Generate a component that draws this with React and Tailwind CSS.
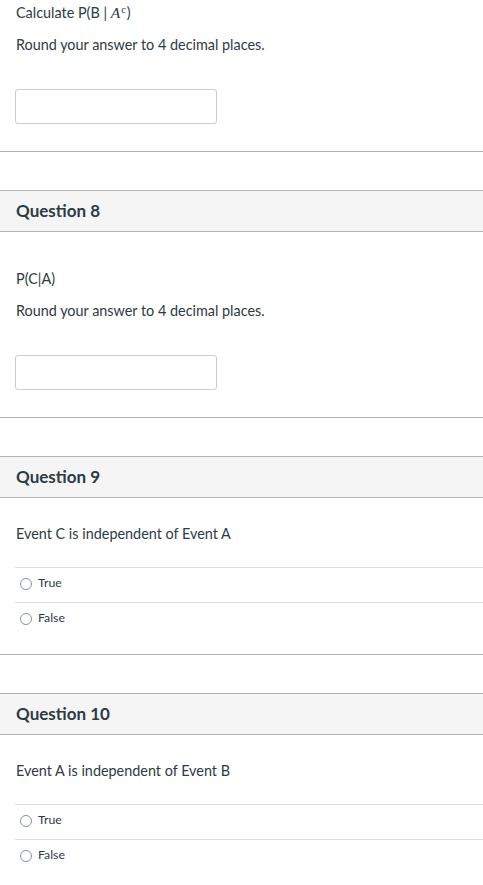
import React from "react";

const font = { fontFamily: "Lato, 'Open Sans', sans-serif" };

function Header({ n }) {
  return (
    <div className="mt-[38px] h-[42px] border-y border-[#b0b3b5] bg-[#f5f5f5] flex items-center pl-4 pb-[2px]">
      <h2 className="text-[17px] font-bold text-[#2d3b45] leading-none">Question {n}</h2>
    </div>
  );
}

function Radio({ label }) {
  return (
    <div className="ml-[15px] h-[35px] flex items-center pb-[3px] border-t border-[#dcdfe1]">
      <span className="ml-[5px] w-[12px] h-[12px] rounded-full border border-[#8b9399] bg-white" />
      <span className="ml-[6px] text-[12.3px] text-[#2d3b45]">{label}</span>
    </div>
  );
}

function TF() {
  return (
    <div className="mt-[23px]">
      <Radio label="True" />
      <Radio label="False" />
    </div>
  );
}

const P = ({ className = "", children }) => (
  <p className={"pl-4 text-[14.4px] leading-5 " + className}>{children}</p>
);

export default function App() {
  return (
    <div className="w-[483px] min-h-[885px] bg-white text-[#2d3b45] overflow-hidden" style={font}>
      <div className="pt-[3px]">
        <P>
          Calculate P(B |{" "}
          <span style={{ fontFamily: "'Liberation Serif', serif" }} className="italic text-[15.5px]">A</span>
          <sup className="text-[10.5px] ml-[1px] mr-[1px]" style={{ fontFamily: "'Liberation Serif', serif" }}>c</sup>)
        </P>
        <P className="mt-3">Round your answer to 4 decimal places.</P>
        <div className="ml-[15px] mt-[34px] w-[202px] h-[35px] rounded-[3px] border border-[#c7cdd1] bg-white" />
        <div className="mt-[27px] border-t border-[#b0b3b5]" />
      </div>

      <Header n={8} />
      <P className="mt-[37px]">P(C|A)</P>
      <P className="mt-3">Round your answer to 4 decimal places.</P>
      <div className="ml-[15px] mt-[34px] w-[202px] h-[35px] rounded-[3px] border border-[#c7cdd1] bg-white" />
      <div className="mt-[27px] border-t border-[#b0b3b5]" />

      <Header n={9} />
      <P className="mt-[26px]">Event C is independent of Event A</P>
      <TF />
      <div className="mt-[17px] border-t border-[#b0b3b5]" />

      <Header n={10} />
      <P className="mt-[26px]">Event A is independent of Event B</P>
      <TF />
    </div>
  );
}
